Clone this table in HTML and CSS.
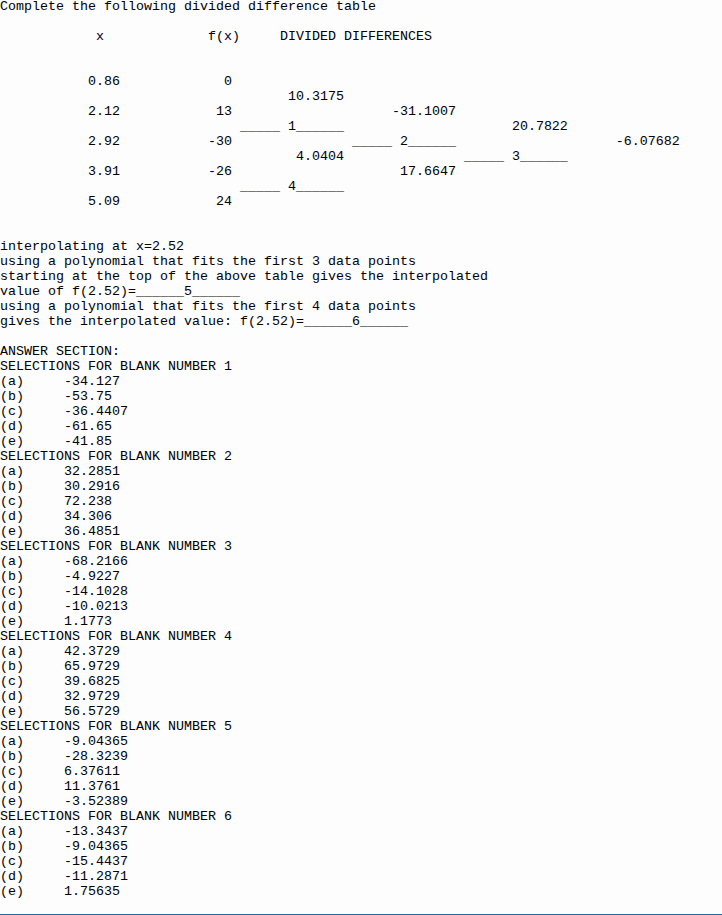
FILE: index.html
```html
<!DOCTYPE html>
<html>
<head>
<meta charset="utf-8">
<link rel="stylesheet" href="styles.css">
</head>
<body>
<pre class="sheet">Complete the following divided difference table

            x             f(x)     DIVIDED DIFFERENCES


           0.86             0
                                    10.3175
           2.12            13                    -31.1007
                              _____ 1______                     20.7822
           2.92           -30               _____ 2______                    -6.07682
                                     4.0404               _____ 3______
           3.91           -26                     17.6647
                              _____ 4______
           5.09            24


interpolating at x=2.52
using a polynomial that fits the first 3 data points
starting at the top of the above table gives the interpolated
value of f(2.52)=______5______
using a polynomial that fits the first 4 data points
gives the interpolated value: f(2.52)=______6______

ANSWER SECTION:
SELECTIONS FOR BLANK NUMBER 1
(a)     -34.127
(b)     -53.75
(c)     -36.4407
(d)     -61.65
(e)     -41.85
SELECTIONS FOR BLANK NUMBER 2
(a)     32.2851
(b)     30.2916
(c)     72.238
(d)     34.306
(e)     36.4851
SELECTIONS FOR BLANK NUMBER 3
(a)     -68.2166
(b)     -4.9227
(c)     -14.1028
(d)     -10.0213
(e)     1.1773
SELECTIONS FOR BLANK NUMBER 4
(a)     42.3729
(b)     65.9729
(c)     39.6825
(d)     32.9729
(e)     56.5729
SELECTIONS FOR BLANK NUMBER 5
(a)     -9.04365
(b)     -28.3239
(c)     6.37611
(d)     11.3761
(e)     -3.52389
SELECTIONS FOR BLANK NUMBER 6
(a)     -13.3437
(b)     -9.04365
(c)     -15.4437
(d)     -11.2871
(e)     1.75635</pre>
</body>
</html>
```
FILE: styles.css
```css
html, body {
  margin: 0;
  padding: 0;
}
body {
  background: #fdfdfd;
  min-height: 100vh;
  box-sizing: border-box;
  border-bottom: 1px solid #2b6ca3;
}
.sheet {
  margin: -1px 0 0;
  font-family: "Liberation Mono", "Courier New", monospace;
  font-size: 13.333px;
  line-height: 15px;
  color: #000;
}
```
